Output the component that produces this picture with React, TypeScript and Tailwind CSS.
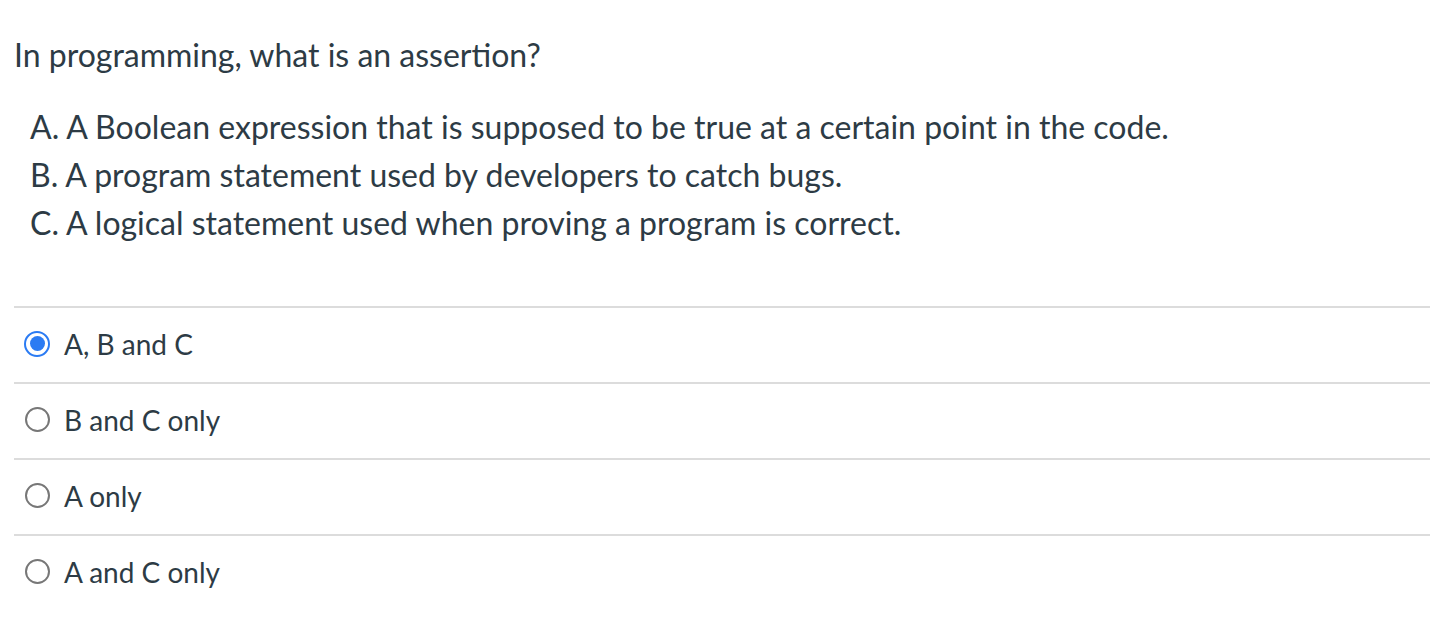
import React, { useState } from 'react';

const OPTIONS = ['A, B and C', 'B and C only', 'A only', 'A and C only'];

const STATEMENTS = [
  'A. A Boolean expression that is supposed to be true at a certain point in the code.',
  'B. A program statement used by developers to catch bugs.',
  'C. A logical statement used when proving a program is correct.',
];

function Radio({ checked }: { checked: boolean }) {
  if (checked) {
    return (
      <span className="flex h-[26px] w-[26px] items-center justify-center rounded-full border-[2.5px] border-[#2b7bf3] bg-white">
        <span className="h-[15px] w-[15px] rounded-full bg-[#2b7bf3]" />
      </span>
    );
  }
  return <span className="h-[25px] w-[25px] rounded-full border-2 border-[#777] bg-white" />;
}

export default function App() {
  const [selected, setSelected] = useState(0);

  return (
    <div className="min-h-[640px] bg-white pl-[14px] text-[#2d3b45]" style={{ fontFamily: 'Lato, "Open Sans", sans-serif' }}>
      <div className="pt-[35px] text-[32px] leading-[40px]">In programming, what is an assertion?</div>

      <div className="mt-[28px] pl-[16px] text-[32px] leading-[48px]">
        {STATEMENTS.map((s) => (
          <div key={s}>{s}</div>
        ))}
      </div>

      <div className="mt-[59px]">
        {OPTIONS.map((opt, i) => (
          <label
            key={opt}
            onClick={() => setSelected(i)}
            className="flex h-[76px] cursor-pointer items-center gap-[14px] border-t-2 border-[#dcdcdc] pb-[3px] pl-[10px] text-[28px]"
          >
            <span className="flex w-[26px] justify-center">
              <Radio checked={selected === i} />
            </span>
            <span>{opt}</span>
          </label>
        ))}
      </div>
    </div>
  );
}
